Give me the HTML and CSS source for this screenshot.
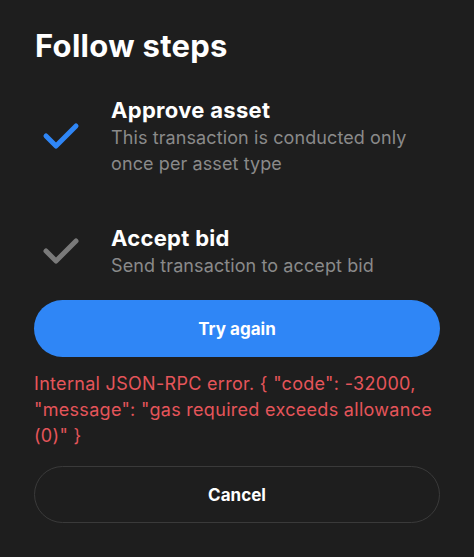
FILE: index.html
```html
<!DOCTYPE html>
<html lang="en">
<head>
    <meta charset="UTF-8">
    <meta name="viewport" content="width=device-width, initial-scale=1.0">
    <title>Follow steps</title>
    <link rel="stylesheet" href="styles.css">
</head>
<body>
    <div class="sheet">
        <h1 class="title">Follow steps</h1>

        <div class="steps">
            <div class="step">
                <div class="step-icon">
                    <svg width="38" height="30" viewBox="0 0 38 30">
                        <path d="M4 14 L14 24 L34 4" fill="none" stroke="#2f86f6" stroke-width="5" stroke-linecap="round" stroke-linejoin="round"/>
                    </svg>
                </div>
                <div class="step-text">
                    <div class="step-title">Approve asset</div>
                    <div class="step-desc">This transaction is conducted only once per asset type</div>
                </div>
            </div>

            <div class="step">
                <div class="step-icon">
                    <svg width="38" height="30" viewBox="0 0 38 30">
                        <path d="M4 14 L14 24 L34 4" fill="none" stroke="#7a7a7a" stroke-width="5" stroke-linecap="round" stroke-linejoin="round"/>
                    </svg>
                </div>
                <div class="step-text">
                    <div class="step-title">Accept bid</div>
                    <div class="step-desc">Send transaction to accept bid</div>
                </div>
            </div>
        </div>

        <button class="btn btn-primary">Try again</button>

        <p class="error">Internal JSON-RPC error. { "code": -32000, "message": "gas required exceeds allowance (0)" }</p>

        <button class="btn btn-outline">Cancel</button>
    </div>
</body>
</html>
```

FILE: styles.css
```css
body {
    margin: 0;
    background-color: #1e1e1e;
    font-family: "Inter", "Noto Sans", sans-serif;
    color: #fff;
}

.sheet {
    padding: 27px 34px 30px 34px;
    display: flex;
    flex-direction: column;
}

.title {
    margin: 0 0 0 1px;
    font-size: 31px;
    font-weight: 700;
    letter-spacing: 0.3px;
    line-height: 38px;
}

.steps {
    display: flex;
    flex-direction: column;
    gap: 48px;
    margin-top: 32px;
}

.step {
    display: flex;
    align-items: center;
}

.step-icon {
    width: 77px;
    flex-shrink: 0;
    display: flex;
    padding-left: 8px;
    box-sizing: border-box;
}

.step-text {
    padding-right: 20px;
}

.step-title {
    font-size: 22px;
    font-weight: 700;
    letter-spacing: 0.3px;
    line-height: 26px;
}

.step-desc {
    font-size: 18px;
    color: #8a8a8a;
    letter-spacing: 0.1px;
    line-height: 26px;
    margin-top: 2px;
}

.btn {
    width: 100%;
    height: 57px;
    border-radius: 29px;
    font-family: inherit;
    font-size: 17px;
    font-weight: 700;
    color: #fff;
    cursor: pointer;
}

.btn-primary {
    margin-top: 21px;
    background-color: #2f86f6; /* blue action */
    border: none;
}

.btn-outline {
    background-color: transparent;
    border: 1px solid #3a3a3a;
}

.error {
    color: #e5555a;
    font-size: 18px;
    letter-spacing: 0.3px;
    line-height: 26px;
    margin: 14px 0 17px 0;
}
```
